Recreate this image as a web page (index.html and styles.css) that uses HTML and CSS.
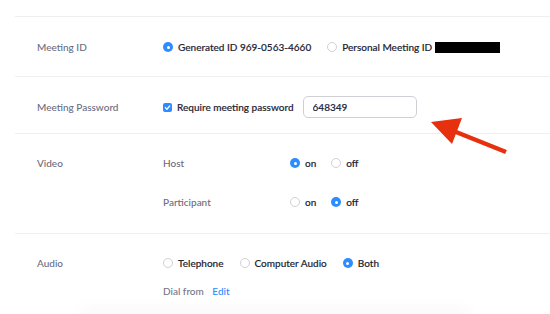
FILE: index.html
```html
<!DOCTYPE html>
<html>
<head>
    <title>Meeting Settings</title>
    <link rel="stylesheet" href="styles.css">
</head>
<body>
    <div class="settings">
        <div class="section section-id">
            <div class="label">Meeting ID</div>
            <div class="options">
                <span class="radio checked"></span><span class="opt">Generated ID 969-0563-4660</span>
                <span class="radio"></span><span class="opt">Personal Meeting ID</span><span class="redacted"></span>
            </div>
        </div>

        <div class="section section-pass">
            <div class="label">Meeting Password</div>
            <div class="options">
                <span class="checkbox">
                    <svg width="9" height="9" viewBox="0 0 9 9"><path d="M2.3 4.6 L3.9 6.2 L6.8 2.9" fill="none" stroke="#fff" stroke-width="1.3" stroke-linecap="round" stroke-linejoin="round"/></svg>
                </span><span class="opt">Require meeting password</span>
                <input class="pass-input" type="text" value="648349">
            </div>
        </div>

        <div class="section section-video">
            <div class="label">Video</div>
            <div class="sub">
                <div class="sub-row">
                    <div class="sub-label">Host</div>
                    <span class="radio checked"></span><span class="opt short">on</span>
                    <span class="radio"></span><span class="opt">off</span>
                </div>
                <div class="sub-row">
                    <div class="sub-label">Participant</div>
                    <span class="radio"></span><span class="opt short">on</span>
                    <span class="radio checked"></span><span class="opt">off</span>
                </div>
            </div>
        </div>

        <div class="section section-audio">
            <div class="label">Audio</div>
            <div class="sub">
                <div class="options">
                    <span class="radio"></span><span class="opt">Telephone</span>
                    <span class="radio"></span><span class="opt">Computer Audio</span>
                    <span class="radio checked"></span><span class="opt">Both</span>
                </div>
                <div class="dial">Dial from <a class="edit" href="#">Edit</a></div>
            </div>
        </div>
    </div>

    <div class="footer-shade"></div>

    <svg class="arrow" width="90" height="50" viewBox="0 0 90 50">
        <line x1="16" y1="12" x2="76" y2="36" stroke="#e6300e" stroke-width="4.5" stroke-linecap="butt"/>
        <polygon points="1,6 32,2 22,28" fill="#e6300e"/>
    </svg>
</body>
</html>
```

FILE: styles.css
```css
body {
    margin: 0;
    padding: 0;
    background-color: #fff;
    font-family: Lato, "Open Sans", sans-serif;
    font-size: 10px;
    font-weight: 500;
    color: #232333;
    width: 550px;
    height: 314px;
    overflow: hidden;
    position: relative;
}

.settings {
    padding-top: 16px;
    margin-left: 15px;
}

.section {
    display: flex;
    border-top: 1px solid #efeff2;
    box-sizing: border-box;
}

.section-id {
    height: 60px;
    padding-top: 20px;
}

.section-pass {
    height: 57px;
    padding-top: 19px;
}

.section-video {
    height: 100px;
    padding-top: 19px;
}

.section-audio {
    padding-top: 19px;
}

.label {
    width: 126px;
    padding-left: 22px;
    height: 20px;
    line-height: 20px;
    color: #6b6b7d;
    flex: none;
}

.section-pass .label {
    height: 22px;
    line-height: 22px;
}

.options {
    display: flex;
    align-items: center;
    height: 20px;
}

.section-pass .options {
    height: 22px;
}

.opt,
.pass-input {
    -webkit-text-stroke: 0.15px #232333;
}

.radio {
    width: 10px;
    height: 10px;
    border-radius: 50%;
    border: 1px solid #d0d0d6;
    box-sizing: border-box;
    background-color: #fff;
    flex: none;
    position: relative;
}

.radio.checked {
    border: none;
    background-color: #2d8cff;
}

.radio.checked::after {
    content: "";
    position: absolute;
    left: 3.5px;
    top: 3.5px;
    width: 3px;
    height: 3px;
    border-radius: 50%;
    background-color: #fff;
}

.opt {
    margin-left: 5px;
    margin-right: 16px;
    white-space: nowrap;
}

.opt.short {
    margin-right: 15px;
}

.redacted {
    display: inline-block;
    width: 65px;
    height: 11px;
    background-color: #000;
    margin-left: -13px;
}

.checkbox {
    width: 9px;
    height: 9px;
    border-radius: 2px;
    background-color: #2d8cff;
    display: flex;
    flex: none;
}

.pass-input {
    width: 114px;
    height: 22px;
    box-sizing: border-box;
    border: 1px solid #cfcfd6;
    border-radius: 5px;
    padding: 0 9px;
    margin-left: -7px;
    font-family: Lato, "Open Sans", sans-serif;
    font-size: 10px;
    font-weight: 500;
    color: #232333;
    outline: none;
}

.sub {
    display: flex;
    flex-direction: column;
}

.sub-row {
    display: flex;
    align-items: center;
    height: 20px;
    margin-bottom: 19px;
}

.sub-label {
    width: 127px;
    color: #6b6b7d;
}

.dial {
    margin-top: 8px;
    height: 20px;
    line-height: 20px;
    color: #747487;
    font-size: 10px;
}

.edit {
    color: #2d8cff;
    text-decoration: none;
    margin-left: 6px;
}

.footer-shade {
    position: absolute;
    left: 80px;
    top: 301px;
    width: 390px;
    height: 16px;
    background: linear-gradient(to bottom, rgba(244, 244, 246, 0), rgba(244, 244, 246, 0.6));
    filter: blur(4px);
}

.arrow {
    position: absolute;
    left: 430px;
    top: 116px;
}
```
